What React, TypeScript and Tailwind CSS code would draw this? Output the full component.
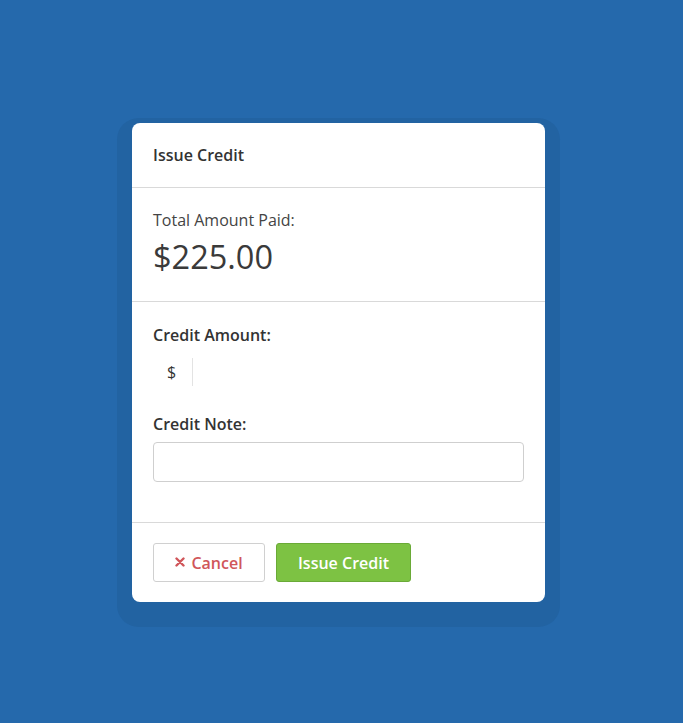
import React from "react";

export default function App() {
  return (
    <div
      className="min-h-screen w-full bg-[#2569ac] pt-[123px] pl-[132px]"
      style={{ fontFamily: '"Open Sans", "Noto Sans", sans-serif' }}
    >
      <div className="w-[413px] rounded-[8px] bg-white text-[#333] shadow-[0_10px_0_15px_#2263a2]">
        <div className="flex h-[65px] items-center border-b border-[#d9d9d9] px-[21px]">
          <h1 className="text-[16px] font-semibold leading-[20px]">Issue Credit</h1>
        </div>
        <div className="border-b border-[#d9d9d9] px-[21px] pt-[22px] pb-[23px]">
          <div className="text-[16px] leading-[20px] text-[#444]">Total Amount Paid:</div>
          <div className="mt-[6px] text-[32.5px] leading-[42px] text-[#3a3a3a]">$225.00</div>
        </div>
        <div className="border-b border-[#d9d9d9] px-[21px] pt-[23px] pb-[40px]">
          <div className="text-[16px] font-semibold leading-[20px]">Credit Amount:</div>
          <div className="mt-[13px] flex h-[28px] items-center">
            <span className="w-[39px] pl-[14px] text-[16px] leading-[20px] text-[#333]">$</span>
            <span className="h-[28px] w-px bg-[#e3e3e3]"></span>
          </div>
          <div className="mt-[28px] text-[16px] font-semibold leading-[20px]">Credit Note:</div>
          <div className="mt-[8px] h-[40px] w-full rounded-[4px] border border-[#cfcfcf] bg-white"></div>
        </div>
        <div className="flex gap-[11px] px-[21px] pt-[20px] pb-[20px]">
          <button className="flex h-[39px] w-[112px] items-center justify-center gap-[6px] rounded-[3px] border border-[#d0d0d0] bg-white text-[16px] font-semibold text-[#d0565a]">
            <svg width="10" height="10" viewBox="0 0 10 10" className="mt-[-1px]">
              <path d="M1.5 1.5 L8.5 8.5 M8.5 1.5 L1.5 8.5" stroke="#d0565a" strokeWidth="2.4" strokeLinecap="round" />
            </svg>
            <span>Cancel</span>
          </button>
          <button className="flex h-[39px] w-[135px] items-center justify-center rounded-[3px] border border-[#6aaa37] bg-[#7dc243] text-[16px] font-semibold text-white">
            Issue Credit
          </button>
        </div>
      </div>
    </div>
  );
}
